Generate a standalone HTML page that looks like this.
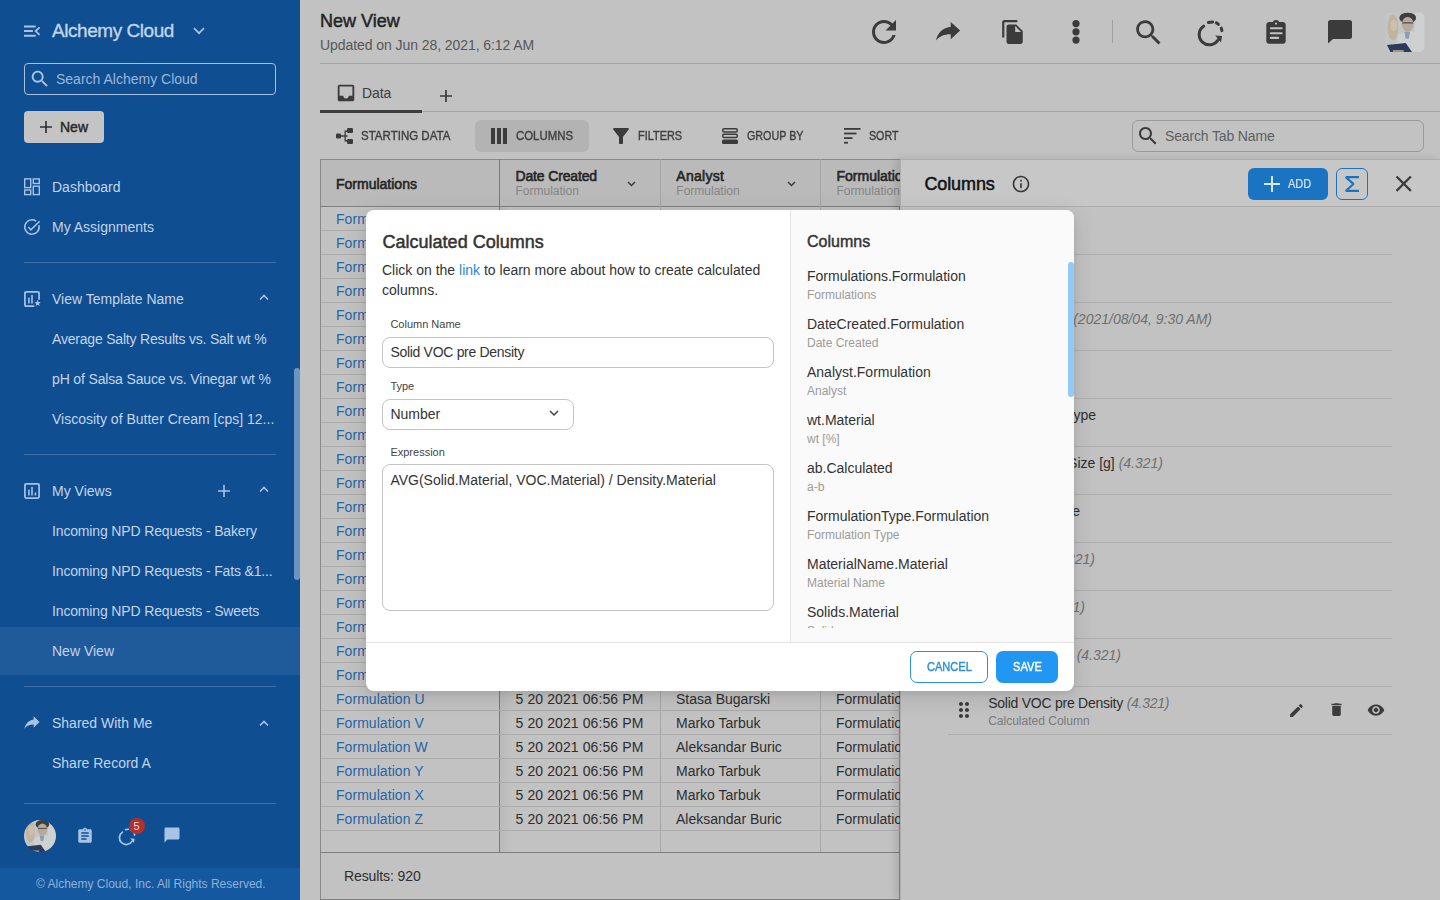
<!DOCTYPE html>
<html><head><meta charset="utf-8">
<style>
*{box-sizing:border-box;margin:0;padding:0}
html,body{width:1440px;height:900px;overflow:hidden;background:#c2c2c2;font-family:"Liberation Sans",sans-serif;color:#333}
.a{position:absolute}
.t{position:absolute;white-space:nowrap;line-height:1}
svg{position:absolute;display:block;overflow:visible}
</style></head><body>

<div class="a" style="left:0px;top:0px;width:300px;height:900px;background:#0f4e91;"></div>
<div class="a" style="left:0px;top:868px;width:300px;height:32px;background:#1459a0;"></div>
<svg style="left:24px;top:24px" width="18" height="14" viewBox="0 0 18 14"><g stroke="#a9c3e4" stroke-width="2" fill="none"><path d="M0 2.5h11.7M0 7.1h8.9M0 11.7h11.7"/><path d="M15.6 3.4L11.6 7.1l4 3.7" stroke-width="1.8"/></g></svg>
<div class="t" style="left:52px;top:21.15px;font-size:19px;color:#c3d4ea;letter-spacing:-0.45px;-webkit-text-stroke:0.35px #c3d4ea;">Alchemy Cloud</div>
<svg style="left:193px;top:27px" width="12" height="8" viewBox="0 0 12 8"><path d="M1 1.2l5 5 5-5" stroke="#a9c3e4" stroke-width="1.7" fill="none"/></svg>
<div class="a" style="left:24px;top:63px;width:252px;height:32px;background:none;border:1px solid #a9c1e0;border-radius:4px"></div>
<svg style="left:29px;top:68px" width="22" height="22" viewBox="0 0 24 24"><path fill="#a9c3e4" d="M15.5 14h-.79l-.28-.27C15.41 12.59 16 11.11 16 9.5 16 5.91 13.09 3 9.5 3S3 5.910 3 9.5 5.91 16 9.5 16c1.61 0 3.09-.59 4.23-1.57l.27.28v.79l5 4.99L20.49 19l-4.99-5zm-6 0C7.01 14 5 11.99 5 9.5S7.01 5 9.5 5 14 7.01 14 9.5 11.99 14 9.5 14z" /></svg>
<div class="t" style="left:56px;top:72.10px;font-size:14px;color:#9db6d8;">Search Alchemy Cloud</div>
<div class="a" style="left:24px;top:111px;width:80px;height:32px;background:#c4c4c4;border-radius:4px"></div>
<svg style="left:40px;top:121px" width="12" height="12" viewBox="0 0 12 12"><path d="M6 0v12M0 6h12" stroke="#2e2e2e" stroke-width="1.6"/></svg>
<div class="t" style="left:60px;top:119.90px;font-size:14px;color:#2a2a2a;-webkit-text-stroke:0.45px #2a2a2a;">New</div>
<svg style="left:24px;top:178px" width="16" height="18" viewBox="0 0 16 18"><g fill="none" stroke="#a9c3e4" stroke-width="1.4"><rect x="0.7" y="0.9" width="6" height="8.7"/><rect x="9.3" y="0.9" width="6" height="4.6"/><rect x="0.7" y="12" width="6" height="4.6"/><rect x="9.3" y="8.2" width="6" height="8.4"/></g></svg>
<div class="t" style="left:52px;top:180.10px;font-size:14px;color:#c3d4ea;">Dashboard</div>
<svg style="left:24px;top:219px" width="16" height="16" viewBox="0 0 16 16"><g fill="none" stroke="#a9c3e4" stroke-width="1.5"><path d="M12.13 2.1A7.2 7.2 0 1 0 14.95 6.14"/><path d="M4.3 7.9L6.9 10.9L15.7 2.2"/></g></svg>
<div class="t" style="left:52px;top:220.10px;font-size:14px;color:#c3d4ea;">My Assignments</div>
<div class="a" style="left:24px;top:262px;width:252px;height:1px;background:#3f72ab;"></div>
<svg style="left:24px;top:291px" width="16" height="16" viewBox="0 0 16 16"><g fill="none" stroke="#a9c3e4" stroke-width="1.7"><path d="M10.3 15.1H2.2Q0.9 15.1 0.9 13.8V2.2Q0.9 0.9 2.2 0.9H13.8Q15.1 0.9 15.1 2.2V8.8"/></g><g fill="#a9c3e4"><rect x="4.1" y="6.4" width="1.6" height="6.3" rx="0.8"/><rect x="7.2" y="3.8" width="1.6" height="8.9" rx="0.8"/><path d="M13.60 8.80 L14.45 11.03 L16.83 11.15 L14.98 12.65 L15.60 14.95 L13.60 13.65 L11.60 14.95 L12.22 12.65 L10.37 11.15 L12.75 11.03z"/></g></svg>
<div class="t" style="left:52px;top:292.10px;font-size:14px;color:#c3d4ea;">View Template Name</div>
<svg style="left:259px;top:294px" width="10" height="6" viewBox="0 0 10 6"><path d="M1 5.5l4-4 4 4" stroke="#a9c3e4" stroke-width="1.6" fill="none"/></svg>
<div class="t" style="left:52px;top:332.10px;font-size:14px;color:#c3d4ea;letter-spacing:-0.2px;">Average Salty Results vs. Salt wt %</div>
<div class="t" style="left:52px;top:372.10px;font-size:14px;color:#c3d4ea;letter-spacing:-0.15px;">pH of Salsa Sauce vs. Vinegar wt %</div>
<div class="t" style="left:52px;top:412.10px;font-size:14px;color:#c3d4ea;">Viscosity of Butter Cream [cps] 12...</div>
<div class="a" style="left:24px;top:454px;width:252px;height:1px;background:#3f72ab;"></div>
<svg style="left:24px;top:483px" width="16" height="16" viewBox="0 0 16 16"><g fill="none" stroke="#a9c3e4" stroke-width="1.7"><rect x="0.9" y="0.9" width="14.2" height="14.2" rx="1.3"/></g><g fill="#a9c3e4"><rect x="4.1" y="6.4" width="1.6" height="6.3" rx="0.8"/><rect x="7.2" y="3.8" width="1.6" height="8.9" rx="0.8"/><rect x="10.6" y="9.2" width="1.6" height="3.5" rx="0.8"/></g></svg>
<div class="t" style="left:52px;top:484.10px;font-size:14px;color:#c3d4ea;">My Views</div>
<svg style="left:218px;top:485px" width="12" height="12" viewBox="0 0 12 12"><path d="M6 0v12M0 6h12" stroke="#a9c3e4" stroke-width="1.6"/></svg>
<svg style="left:259px;top:486px" width="10" height="6" viewBox="0 0 10 6"><path d="M1 5.5l4-4 4 4" stroke="#a9c3e4" stroke-width="1.6" fill="none"/></svg>
<div class="t" style="left:52px;top:524.10px;font-size:14px;color:#c3d4ea;letter-spacing:-0.15px;">Incoming NPD Requests - Bakery</div>
<div class="t" style="left:52px;top:564.10px;font-size:14px;color:#c3d4ea;letter-spacing:-0.15px;">Incoming NPD Requests - Fats &amp;1...</div>
<div class="t" style="left:52px;top:604.10px;font-size:14px;color:#c3d4ea;letter-spacing:-0.15px;">Incoming NPD Requests - Sweets</div>
<div class="a" style="left:0px;top:627px;width:300px;height:48px;background:#1f5a9b;"></div>
<div class="t" style="left:52px;top:644.10px;font-size:14px;color:#c3d4ea;">New View</div>
<div class="a" style="left:24px;top:686px;width:252px;height:1px;background:#3f72ab;"></div>
<svg style="left:22px;top:712px" width="20" height="20" viewBox="0 0 24 24"><path fill="#a9c3e4" d="M14 9V5l7 7-7 7v-4.1c-5 0-8.5 1.6-11 5.1 1-5 4-10 11-11z" /></svg>
<div class="t" style="left:52px;top:716.10px;font-size:14px;color:#c3d4ea;">Shared With Me</div>
<svg style="left:259px;top:720px" width="10" height="6" viewBox="0 0 10 6"><path d="M1 5.5l4-4 4 4" stroke="#a9c3e4" stroke-width="1.6" fill="none"/></svg>
<div class="t" style="left:52px;top:756.10px;font-size:14px;color:#c3d4ea;">Share Record A</div>
<div class="a" style="left:24px;top:803px;width:252px;height:1px;background:#3f72ab;"></div>
<svg style="left:24px;top:820px" width="32" height="32" viewBox="0 0 40 40"><defs><clipPath id="cav"><circle cx="20" cy="20" r="20"/></clipPath><filter id="blr"><feGaussianBlur stdDeviation="0.7"/></filter></defs><g clip-path="url(#cav)" filter="url(#blr)"><rect x="-2" y="-2" width="44" height="44" fill="#c3c6c6"/><rect x="30" y="0" width="12" height="40" fill="#cdd1d1"/><ellipse cx="8" cy="15" rx="5.5" ry="13" fill="#c2b39c"/><ellipse cx="9" cy="13" rx="3.5" ry="6" fill="#cdbfae"/><path d="M12 40L13 23Q21 17 30 20L40 27V40z" fill="#cfd1d1"/><ellipse cx="23" cy="5.5" rx="8.5" ry="5.5" fill="#403c3c"/><ellipse cx="23" cy="12" rx="6" ry="7.5" fill="#b7aa9c"/><path d="M17.5 10.5h11" stroke="#4a4545" stroke-width="1.2"/><path d="M19.5 19.5h6l-1.5 7h-3z" fill="#8e9cb5"/><path d="M2 33L21 31L28 41H6z" fill="#2b3a5c"/><path d="M8 38h11v3H8z" fill="#a49580"/></g></svg>
<svg style="left:76px;top:827px" width="18" height="18" viewBox="0 0 24 24"><path fill="#a9c3e4" d="M19 3h-4.18C14.4 1.84 13.3 1 12 1c-1.3 0-2.4.84-2.82 2H5c-1.1 0-2 .9-2 2v14c0 1.1.9 2 2 2h14c1.1 0 2-.9 2-2V5c0-1.1-.9-2-2-2zm-7 0c.55 0 1 .45 1 1s-.45 1-1 1-1-.45-1-1 .45-1 1-1zm2 14H7v-2h7v2zm3-4H7v-2h10v2zm0-4H7V7h10v2z" /></svg>
<svg style="left:120px;top:828px" width="16" height="16" viewBox="0 0 24 24"><g fill="none" stroke="#a9c3e4" stroke-width="2.6" stroke-linecap="round"><path d="M3.64 6.15A10.2 10.2 0 1 0 18.2 19.7"/><path d="M8.4 2.5L12.6 1.9M16.3 2.8L18.4 4.3M21.3 8.1L21.9 10.6"/></g><path d="M15.2 15.4L22 16L21 22.4z" fill="#a9c3e4"/></svg>
<svg style="left:129px;top:818px" width="16" height="16" viewBox="0 0 16 16"><circle cx="8" cy="8" r="8" fill="#b3302c"/></svg>
<div class="t" style="left:133.5px;top:821.15px;font-size:11px;color:#f0d6d6;">5</div>
<svg style="left:163px;top:826px" width="18" height="18" viewBox="0 0 24 24"><path fill="#a9c3e4" d="M20 2H4c-1.1 0-1.99.9-1.99 2L2 22l4-4h14c1.1 0 2-.9 2-2V4c0-1.1-.9-2-2-2z" /></svg>
<div class="t" style="left:36px;top:877.80px;font-size:12px;color:#93afd5;">© Alchemy Cloud, Inc. All Rights Reserved.</div>
<div class="a" style="left:294px;top:368px;width:6px;height:212px;background:#6a94c4;border-radius:3px"></div>
<div class="t" style="left:320px;top:11.50px;font-size:18px;color:#262626;-webkit-text-stroke:0.5px #262626;">New View</div>
<div class="t" style="left:320px;top:38.10px;font-size:14px;color:#575757;letter-spacing:-0.07px;">Updated on Jun 28, 2021, 6:12 AM</div>
<div class="a" style="left:320px;top:63px;width:1120px;height:1px;background:#a6a6a6;"></div>
<svg style="left:866px;top:14px" width="36" height="36" viewBox="0 0 24 24"><path fill="#3b3b3b" d="M17.65 6.35C16.2 4.9 14.21 4 12 4c-4.42 0-7.99 3.58-7.99 8s3.57 8 7.99 8c3.73 0 6.84-2.55 7.73-6h-2.08c-.82 2.33-3.04 4-5.65 4-3.31 0-6-2.69-6-6s2.69-6 6-6c1.66 0 3.140.69 4.22 1.78L13 11h7V4l-2.35 2.35z" /></svg>
<svg style="left:934px;top:18px" width="28" height="28" viewBox="0 0 28 28"><path fill="#3b3b3b" d="M14 9V5l7 7-7 7v-4.1c-5 0-8.5 1.6-11 5.1 1-5 4-10 11-11z" transform="translate(-2 -2.3) scale(1.34 1.24)"/></svg>
<svg style="left:999.5px;top:18.9px" width="26" height="26" viewBox="0 0 24 24"><path fill="#3b3b3b" d="M16 1H4c-1.1 0-2 .9-2 2v14h2V3h12V1zm-1 4l6 6v10c0 1.1-.9 2-2 2H7.99C6.89 23 6 22.1 6 21l.01-14c0-1.1.89-2 1.99-2h7zm-1 7h5.5L14 6.5V12z" /></svg>
<svg style="left:1072px;top:20px" width="8" height="24" viewBox="0 0 8 24"><g fill="#3b3b3b"><circle cx="4" cy="3.6" r="3.6"/><circle cx="4" cy="11.85" r="3.6"/><circle cx="4" cy="20.1" r="3.6"/></g></svg>
<div class="a" style="left:1112px;top:20px;width:1px;height:23px;background:#a0a0a0;"></div>
<svg style="left:1131.7px;top:16.1px" width="33.4" height="33.4" viewBox="0 0 24 24"><path fill="#3b3b3b" d="M15.5 14h-.79l-.28-.27C15.41 12.59 16 11.11 16 9.5 16 5.91 13.09 3 9.5 3S3 5.910 3 9.5 5.91 16 9.5 16c1.61 0 3.09-.59 4.23-1.57l.27.28v.79l5 4.99L20.49 19l-4.99-5zm-6 0C7.01 14 5 11.99 5 9.5S7.01 5 9.5 5 14 7.01 14 9.5 11.99 14 9.5 14z" /></svg>
<svg style="left:1200px;top:20px" width="24" height="24" viewBox="0 0 24 24"><g fill="none" stroke="#3b3b3b" stroke-width="3" stroke-linecap="round"><path d="M3.64 6.15A10.2 10.2 0 1 0 18.2 19.7"/><path d="M8.4 2.5L12.6 1.9M16.3 2.8L18.4 4.3M21.3 8.1L21.9 10.6"/></g><path d="M15.2 15.4L22 16L21 22.4z" fill="#3b3b3b"/></svg>
<svg style="left:1266px;top:20px" width="20" height="24" viewBox="0 0 20 24"><g fill="#3b3b3b"><rect x="0.3" y="2" width="19.4" height="21.8" rx="3"/><circle cx="10" cy="3.3" r="3.2"/></g><circle cx="10" cy="3.6" r="1.1" fill="#c2c2c2"/><g stroke="#c2c2c2" stroke-width="2.1" stroke-linecap="round"><path d="M4.8 8.2h10.8M4.8 13.2h10.8M4.8 17.9h7.4"/></g></svg>
<svg style="left:1328px;top:20px" width="24" height="24" viewBox="0 0 24 24"><path fill="#3b3b3b" d="M2.5 0h19A2.5 2.5 0 0 1 24 2.5v14a2.5 2.5 0 0 1-2.5 2.5H5L0 23.5V2.5A2.5 2.5 0 0 1 2.5 0z"/></svg>
<svg style="left:1384.5px;top:11.7px" width="39.5" height="40.5" viewBox="0 0 40 40"><defs><clipPath id="cav2"><rect width="40" height="40" rx="5"/></clipPath></defs><g clip-path="url(#cav2)" filter="url(#blr)"><rect x="-2" y="-2" width="44" height="44" fill="#c3c6c6"/><rect x="30" y="0" width="12" height="40" fill="#cdd1d1"/><ellipse cx="8" cy="15" rx="5.5" ry="13" fill="#c2b39c"/><ellipse cx="9" cy="13" rx="3.5" ry="6" fill="#cdbfae"/><path d="M12 40L13 23Q21 17 30 20L40 27V40z" fill="#cfd1d1"/><ellipse cx="23" cy="5.5" rx="8.5" ry="5.5" fill="#403c3c"/><ellipse cx="23" cy="12" rx="6" ry="7.5" fill="#b7aa9c"/><path d="M17.5 10.5h11" stroke="#4a4545" stroke-width="1.2"/><path d="M19.5 19.5h6l-1.5 7h-3z" fill="#8e9cb5"/><path d="M2 33L21 31L28 41H6z" fill="#2b3a5c"/><path d="M8 38h11v3H8z" fill="#a49580"/></g></svg>
<svg style="left:335px;top:82px" width="22" height="22" viewBox="0 0 24 24"><path fill="#3b3b3b" d="M19 3H4.99c-1.11 0-1.98.89-1.98 2L3 19c0 1.1.88 2 1.99 2H19c1.1 0 2-.9 2-2V5c0-1.11-.9-2-2-2zm0 12h-4c0 1.66-1.35 3-3 3s-3-1.34-3-3H4.99V5H19v10z" /></svg>
<div class="t" style="left:362px;top:86.10px;font-size:14px;color:#3d3d3d;letter-spacing:-0.1px;">Data</div>
<svg style="left:440px;top:90px" width="12" height="12" viewBox="0 0 12 12"><path d="M6 0v12M0 6h12" stroke="#3b3b3b" stroke-width="1.7"/></svg>
<div class="a" style="left:320px;top:111px;width:1120px;height:1px;background:#a6a6a6;"></div>
<div class="a" style="left:320px;top:110px;width:102px;height:2.5px;background:#3e3e3e;"></div>
<div class="a" style="left:475px;top:120px;width:114px;height:32px;background:#b3b3b3;border-radius:6px"></div>
<svg style="left:336px;top:128px" width="17" height="16" viewBox="0 0 17 16"><g fill="#3b3b3b"><rect x="0" y="5.5" width="5" height="5" rx="1.2"/><rect x="11" y="0" width="6" height="5" rx="1.2"/><rect x="11" y="11" width="6" height="5" rx="1.2"/><path d="M4 7.2h4.5V2.5h3v1.4h-1.7v3.3h1.7v1.6h-1.7v3.3h1.7v1.4h-3V8.8H4z"/></g></svg>
<div class="t" style="left:360.5px;top:128.65px;font-size:13px;color:#404040;transform:scaleX(0.886);transform-origin:0 0;-webkit-text-stroke:0.4px #404040;">STARTING DATA</div>
<svg style="left:491px;top:128px" width="16" height="16" viewBox="0 0 16 16"><g fill="#3b3b3b"><rect x="0" y="0" width="4" height="16"/><rect x="6" y="0" width="4" height="16"/><rect x="12" y="0" width="4" height="16"/></g></svg>
<div class="t" style="left:515.5px;top:128.65px;font-size:13px;color:#404040;transform:scaleX(0.877);transform-origin:0 0;-webkit-text-stroke:0.4px #404040;">COLUMNS</div>
<svg style="left:609px;top:124px" width="24" height="24" viewBox="0 0 24 24"><path fill="#3b3b3b" d="M4.25 5.61C6.27 8.2 10 13 10 13v6c0 .55.45 1 1 1h2c.55 0 1-.45 1-1v-6s3.72-4.8 5.74-7.39c.51-.66.04-1.61-.79-1.61H5.04c-.83 0-1.3.95-.79 1.61z" /></svg>
<div class="t" style="left:637.5px;top:128.65px;font-size:13px;color:#404040;transform:scaleX(0.84);transform-origin:0 0;-webkit-text-stroke:0.4px #404040;">FILTERS</div>
<svg style="left:722px;top:128px" width="16" height="16" viewBox="0 0 16 16"><g fill="none" stroke="#3b3b3b" stroke-width="1.5"><rect x="0.75" y="0.75" width="14.5" height="3.3" rx="1.3"/><rect x="0.75" y="6.3" width="14.5" height="3.3" rx="1.3"/></g><rect x="0" y="11.4" width="16" height="4.6" rx="1.5" fill="#3b3b3b"/></svg>
<div class="t" style="left:746.5px;top:128.65px;font-size:13px;color:#404040;transform:scaleX(0.826);transform-origin:0 0;-webkit-text-stroke:0.4px #404040;">GROUP BY</div>
<svg style="left:844px;top:128px" width="17" height="16" viewBox="0 0 17 16"><g fill="#3b3b3b"><rect x="0" y="0" width="16.5" height="1.8"/><rect x="0" y="4.6" width="12.5" height="1.8"/><rect x="0" y="9.2" width="8.5" height="1.8"/><rect x="0" y="13.8" width="4" height="1.8"/></g></svg>
<div class="t" style="left:868.5px;top:128.65px;font-size:13px;color:#404040;transform:scaleX(0.82);transform-origin:0 0;-webkit-text-stroke:0.4px #404040;">SORT</div>
<div class="a" style="left:1132px;top:120px;width:292px;height:32px;background:none;border:1px solid #9a9a9a;border-radius:6px"></div>
<svg style="left:1136px;top:124px" width="24" height="24" viewBox="0 0 24 24"><path fill="#3b3b3b" d="M15.5 14h-.79l-.28-.27C15.41 12.59 16 11.11 16 9.5 16 5.91 13.09 3 9.5 3S3 5.910 3 9.5 5.91 16 9.5 16c1.61 0 3.09-.59 4.23-1.57l.27.28v.79l5 4.99L20.49 19l-4.99-5zm-6 0C7.01 14 5 11.99 5 9.5S7.01 5 9.5 5 14 7.01 14 9.5 11.99 14 9.5 14z" /></svg>
<div class="t" style="left:1165px;top:128.80px;font-size:14px;color:#5f5f5f;letter-spacing:-0.15px;">Search Tab Name</div>
<div class="a" style="left:320px;top:159px;width:580px;height:741px;background:#c2c2c2;border:1px solid #8a8a8a;border-bottom:none"></div>
<div class="a" style="left:321px;top:160px;width:579px;height:47px;background:#bababa;"></div>
<div class="a" style="left:320px;top:206px;width:580px;height:1px;background:#808080;"></div>
<div class="a" style="left:500px;top:207px;width:12px;height:646px;background:linear-gradient(to right, rgba(0,0,0,0.045), rgba(0,0,0,0));"></div>
<div class="a" style="left:499px;top:159px;width:1.2px;height:694px;background:#7a7a7a;"></div>
<div class="a" style="left:660px;top:159px;width:1px;height:694px;background:#a6a6a6;"></div>
<div class="a" style="left:820px;top:159px;width:1px;height:694px;background:#a6a6a6;"></div>
<div class="t" style="left:336px;top:177.10px;font-size:14px;color:#262626;-webkit-text-stroke:0.6px #262626;">Formulations</div>
<div class="t" style="left:515.5px;top:168.60px;font-size:14px;color:#262626;letter-spacing:-0.15px;-webkit-text-stroke:0.6px #262626;">Date Created</div>
<div class="t" style="left:515.5px;top:184.80px;font-size:12px;color:#858585;">Formulation</div>
<svg style="left:627px;top:181px" width="9" height="6" viewBox="0 0 9 6"><path d="M1 1l3.5 3.5L8 1" stroke="#3b3b3b" stroke-width="1.5" fill="none"/></svg>
<div class="t" style="left:676.3px;top:168.90px;font-size:14px;color:#262626;letter-spacing:0.3px;-webkit-text-stroke:0.6px #262626;">Analyst</div>
<div class="t" style="left:676.3px;top:185.00px;font-size:12px;color:#858585;">Formulation</div>
<svg style="left:787px;top:181px" width="9" height="6" viewBox="0 0 9 6"><path d="M1 1l3.5 3.5L8 1" stroke="#3b3b3b" stroke-width="1.5" fill="none"/></svg>
<div class="t" style="left:836.5px;top:168.90px;font-size:14px;color:#262626;-webkit-text-stroke:0.6px #262626;">Formulation</div>
<div class="t" style="left:836.5px;top:185.00px;font-size:12px;color:#858585;">Formulation</div>
<div class="a" style="left:321px;top:230px;width:579px;height:1px;background:#acacac;"></div>
<div class="t" style="left:336px;top:211.60px;font-size:14px;color:#2466a6;letter-spacing:0.05px;">Formulation A</div>
<div class="t" style="left:515.5px;top:211.60px;font-size:14px;color:#2e2e2e;letter-spacing:0.1px;">5 20 2021 06:56 PM</div>
<div class="t" style="left:676px;top:211.60px;font-size:14px;color:#2e2e2e;">Marko Tarbuk</div>
<div class="a" style="left:821px;top:209.5px;width:79px;height:18px;overflow:hidden"><div class="t" style="left:15px;top:2.1px;font-size:14px;color:#2e2e2e">Formulation</div></div>
<div class="a" style="left:321px;top:254px;width:579px;height:1px;background:#acacac;"></div>
<div class="t" style="left:336px;top:235.60px;font-size:14px;color:#2466a6;letter-spacing:0.05px;">Formulation B</div>
<div class="t" style="left:515.5px;top:235.60px;font-size:14px;color:#2e2e2e;letter-spacing:0.1px;">5 20 2021 06:56 PM</div>
<div class="t" style="left:676px;top:235.60px;font-size:14px;color:#2e2e2e;">Aleksandar Buric</div>
<div class="a" style="left:821px;top:233.5px;width:79px;height:18px;overflow:hidden"><div class="t" style="left:15px;top:2.1px;font-size:14px;color:#2e2e2e">Formulation</div></div>
<div class="a" style="left:321px;top:278px;width:579px;height:1px;background:#acacac;"></div>
<div class="t" style="left:336px;top:259.60px;font-size:14px;color:#2466a6;letter-spacing:0.05px;">Formulation C</div>
<div class="t" style="left:515.5px;top:259.60px;font-size:14px;color:#2e2e2e;letter-spacing:0.1px;">5 20 2021 06:56 PM</div>
<div class="t" style="left:676px;top:259.60px;font-size:14px;color:#2e2e2e;">Stasa Bugarski</div>
<div class="a" style="left:821px;top:257.5px;width:79px;height:18px;overflow:hidden"><div class="t" style="left:15px;top:2.1px;font-size:14px;color:#2e2e2e">Formulation</div></div>
<div class="a" style="left:321px;top:302px;width:579px;height:1px;background:#acacac;"></div>
<div class="t" style="left:336px;top:283.60px;font-size:14px;color:#2466a6;letter-spacing:0.05px;">Formulation D</div>
<div class="t" style="left:515.5px;top:283.60px;font-size:14px;color:#2e2e2e;letter-spacing:0.1px;">5 20 2021 06:56 PM</div>
<div class="t" style="left:676px;top:283.60px;font-size:14px;color:#2e2e2e;">Marko Tarbuk</div>
<div class="a" style="left:821px;top:281.5px;width:79px;height:18px;overflow:hidden"><div class="t" style="left:15px;top:2.1px;font-size:14px;color:#2e2e2e">Formulation</div></div>
<div class="a" style="left:321px;top:326px;width:579px;height:1px;background:#acacac;"></div>
<div class="t" style="left:336px;top:307.60px;font-size:14px;color:#2466a6;letter-spacing:0.05px;">Formulation E</div>
<div class="t" style="left:515.5px;top:307.60px;font-size:14px;color:#2e2e2e;letter-spacing:0.1px;">5 20 2021 06:56 PM</div>
<div class="t" style="left:676px;top:307.60px;font-size:14px;color:#2e2e2e;">Aleksandar Buric</div>
<div class="a" style="left:821px;top:305.5px;width:79px;height:18px;overflow:hidden"><div class="t" style="left:15px;top:2.1px;font-size:14px;color:#2e2e2e">Formulation</div></div>
<div class="a" style="left:321px;top:350px;width:579px;height:1px;background:#acacac;"></div>
<div class="t" style="left:336px;top:331.60px;font-size:14px;color:#2466a6;letter-spacing:0.05px;">Formulation F</div>
<div class="t" style="left:515.5px;top:331.60px;font-size:14px;color:#2e2e2e;letter-spacing:0.1px;">5 20 2021 06:56 PM</div>
<div class="t" style="left:676px;top:331.60px;font-size:14px;color:#2e2e2e;">Stasa Bugarski</div>
<div class="a" style="left:821px;top:329.5px;width:79px;height:18px;overflow:hidden"><div class="t" style="left:15px;top:2.1px;font-size:14px;color:#2e2e2e">Formulation</div></div>
<div class="a" style="left:321px;top:374px;width:579px;height:1px;background:#acacac;"></div>
<div class="t" style="left:336px;top:355.60px;font-size:14px;color:#2466a6;letter-spacing:0.05px;">Formulation G</div>
<div class="t" style="left:515.5px;top:355.60px;font-size:14px;color:#2e2e2e;letter-spacing:0.1px;">5 20 2021 06:56 PM</div>
<div class="t" style="left:676px;top:355.60px;font-size:14px;color:#2e2e2e;">Marko Tarbuk</div>
<div class="a" style="left:821px;top:353.5px;width:79px;height:18px;overflow:hidden"><div class="t" style="left:15px;top:2.1px;font-size:14px;color:#2e2e2e">Formulation</div></div>
<div class="a" style="left:321px;top:398px;width:579px;height:1px;background:#acacac;"></div>
<div class="t" style="left:336px;top:379.60px;font-size:14px;color:#2466a6;letter-spacing:0.05px;">Formulation H</div>
<div class="t" style="left:515.5px;top:379.60px;font-size:14px;color:#2e2e2e;letter-spacing:0.1px;">5 20 2021 06:56 PM</div>
<div class="t" style="left:676px;top:379.60px;font-size:14px;color:#2e2e2e;">Aleksandar Buric</div>
<div class="a" style="left:821px;top:377.5px;width:79px;height:18px;overflow:hidden"><div class="t" style="left:15px;top:2.1px;font-size:14px;color:#2e2e2e">Formulation</div></div>
<div class="a" style="left:321px;top:422px;width:579px;height:1px;background:#acacac;"></div>
<div class="t" style="left:336px;top:403.60px;font-size:14px;color:#2466a6;letter-spacing:0.05px;">Formulation I</div>
<div class="t" style="left:515.5px;top:403.60px;font-size:14px;color:#2e2e2e;letter-spacing:0.1px;">5 20 2021 06:56 PM</div>
<div class="t" style="left:676px;top:403.60px;font-size:14px;color:#2e2e2e;">Stasa Bugarski</div>
<div class="a" style="left:821px;top:401.5px;width:79px;height:18px;overflow:hidden"><div class="t" style="left:15px;top:2.1px;font-size:14px;color:#2e2e2e">Formulation</div></div>
<div class="a" style="left:321px;top:446px;width:579px;height:1px;background:#acacac;"></div>
<div class="t" style="left:336px;top:427.60px;font-size:14px;color:#2466a6;letter-spacing:0.05px;">Formulation J</div>
<div class="t" style="left:515.5px;top:427.60px;font-size:14px;color:#2e2e2e;letter-spacing:0.1px;">5 20 2021 06:56 PM</div>
<div class="t" style="left:676px;top:427.60px;font-size:14px;color:#2e2e2e;">Marko Tarbuk</div>
<div class="a" style="left:821px;top:425.5px;width:79px;height:18px;overflow:hidden"><div class="t" style="left:15px;top:2.1px;font-size:14px;color:#2e2e2e">Formulation</div></div>
<div class="a" style="left:321px;top:470px;width:579px;height:1px;background:#acacac;"></div>
<div class="t" style="left:336px;top:451.60px;font-size:14px;color:#2466a6;letter-spacing:0.05px;">Formulation K</div>
<div class="t" style="left:515.5px;top:451.60px;font-size:14px;color:#2e2e2e;letter-spacing:0.1px;">5 20 2021 06:56 PM</div>
<div class="t" style="left:676px;top:451.60px;font-size:14px;color:#2e2e2e;">Aleksandar Buric</div>
<div class="a" style="left:821px;top:449.5px;width:79px;height:18px;overflow:hidden"><div class="t" style="left:15px;top:2.1px;font-size:14px;color:#2e2e2e">Formulation</div></div>
<div class="a" style="left:321px;top:494px;width:579px;height:1px;background:#acacac;"></div>
<div class="t" style="left:336px;top:475.60px;font-size:14px;color:#2466a6;letter-spacing:0.05px;">Formulation L</div>
<div class="t" style="left:515.5px;top:475.60px;font-size:14px;color:#2e2e2e;letter-spacing:0.1px;">5 20 2021 06:56 PM</div>
<div class="t" style="left:676px;top:475.60px;font-size:14px;color:#2e2e2e;">Stasa Bugarski</div>
<div class="a" style="left:821px;top:473.5px;width:79px;height:18px;overflow:hidden"><div class="t" style="left:15px;top:2.1px;font-size:14px;color:#2e2e2e">Formulation</div></div>
<div class="a" style="left:321px;top:518px;width:579px;height:1px;background:#acacac;"></div>
<div class="t" style="left:336px;top:499.60px;font-size:14px;color:#2466a6;letter-spacing:0.05px;">Formulation M</div>
<div class="t" style="left:515.5px;top:499.60px;font-size:14px;color:#2e2e2e;letter-spacing:0.1px;">5 20 2021 06:56 PM</div>
<div class="t" style="left:676px;top:499.60px;font-size:14px;color:#2e2e2e;">Marko Tarbuk</div>
<div class="a" style="left:821px;top:497.5px;width:79px;height:18px;overflow:hidden"><div class="t" style="left:15px;top:2.1px;font-size:14px;color:#2e2e2e">Formulation</div></div>
<div class="a" style="left:321px;top:542px;width:579px;height:1px;background:#acacac;"></div>
<div class="t" style="left:336px;top:523.60px;font-size:14px;color:#2466a6;letter-spacing:0.05px;">Formulation N</div>
<div class="t" style="left:515.5px;top:523.60px;font-size:14px;color:#2e2e2e;letter-spacing:0.1px;">5 20 2021 06:56 PM</div>
<div class="t" style="left:676px;top:523.60px;font-size:14px;color:#2e2e2e;">Aleksandar Buric</div>
<div class="a" style="left:821px;top:521.5px;width:79px;height:18px;overflow:hidden"><div class="t" style="left:15px;top:2.1px;font-size:14px;color:#2e2e2e">Formulation</div></div>
<div class="a" style="left:321px;top:566px;width:579px;height:1px;background:#acacac;"></div>
<div class="t" style="left:336px;top:547.60px;font-size:14px;color:#2466a6;letter-spacing:0.05px;">Formulation O</div>
<div class="t" style="left:515.5px;top:547.60px;font-size:14px;color:#2e2e2e;letter-spacing:0.1px;">5 20 2021 06:56 PM</div>
<div class="t" style="left:676px;top:547.60px;font-size:14px;color:#2e2e2e;">Stasa Bugarski</div>
<div class="a" style="left:821px;top:545.5px;width:79px;height:18px;overflow:hidden"><div class="t" style="left:15px;top:2.1px;font-size:14px;color:#2e2e2e">Formulation</div></div>
<div class="a" style="left:321px;top:590px;width:579px;height:1px;background:#acacac;"></div>
<div class="t" style="left:336px;top:571.60px;font-size:14px;color:#2466a6;letter-spacing:0.05px;">Formulation P</div>
<div class="t" style="left:515.5px;top:571.60px;font-size:14px;color:#2e2e2e;letter-spacing:0.1px;">5 20 2021 06:56 PM</div>
<div class="t" style="left:676px;top:571.60px;font-size:14px;color:#2e2e2e;">Marko Tarbuk</div>
<div class="a" style="left:821px;top:569.5px;width:79px;height:18px;overflow:hidden"><div class="t" style="left:15px;top:2.1px;font-size:14px;color:#2e2e2e">Formulation</div></div>
<div class="a" style="left:321px;top:614px;width:579px;height:1px;background:#acacac;"></div>
<div class="t" style="left:336px;top:595.60px;font-size:14px;color:#2466a6;letter-spacing:0.05px;">Formulation Q</div>
<div class="t" style="left:515.5px;top:595.60px;font-size:14px;color:#2e2e2e;letter-spacing:0.1px;">5 20 2021 06:56 PM</div>
<div class="t" style="left:676px;top:595.60px;font-size:14px;color:#2e2e2e;">Aleksandar Buric</div>
<div class="a" style="left:821px;top:593.5px;width:79px;height:18px;overflow:hidden"><div class="t" style="left:15px;top:2.1px;font-size:14px;color:#2e2e2e">Formulation</div></div>
<div class="a" style="left:321px;top:638px;width:579px;height:1px;background:#acacac;"></div>
<div class="t" style="left:336px;top:619.60px;font-size:14px;color:#2466a6;letter-spacing:0.05px;">Formulation R</div>
<div class="t" style="left:515.5px;top:619.60px;font-size:14px;color:#2e2e2e;letter-spacing:0.1px;">5 20 2021 06:56 PM</div>
<div class="t" style="left:676px;top:619.60px;font-size:14px;color:#2e2e2e;">Stasa Bugarski</div>
<div class="a" style="left:821px;top:617.5px;width:79px;height:18px;overflow:hidden"><div class="t" style="left:15px;top:2.1px;font-size:14px;color:#2e2e2e">Formulation</div></div>
<div class="a" style="left:321px;top:662px;width:579px;height:1px;background:#acacac;"></div>
<div class="t" style="left:336px;top:643.60px;font-size:14px;color:#2466a6;letter-spacing:0.05px;">Formulation S</div>
<div class="t" style="left:515.5px;top:643.60px;font-size:14px;color:#2e2e2e;letter-spacing:0.1px;">5 20 2021 06:56 PM</div>
<div class="t" style="left:676px;top:643.60px;font-size:14px;color:#2e2e2e;">Marko Tarbuk</div>
<div class="a" style="left:821px;top:641.5px;width:79px;height:18px;overflow:hidden"><div class="t" style="left:15px;top:2.1px;font-size:14px;color:#2e2e2e">Formulation</div></div>
<div class="a" style="left:321px;top:686px;width:579px;height:1px;background:#acacac;"></div>
<div class="t" style="left:336px;top:667.60px;font-size:14px;color:#2466a6;letter-spacing:0.05px;">Formulation T</div>
<div class="t" style="left:515.5px;top:667.60px;font-size:14px;color:#2e2e2e;letter-spacing:0.1px;">5 20 2021 06:56 PM</div>
<div class="t" style="left:676px;top:667.60px;font-size:14px;color:#2e2e2e;">Aleksandar Buric</div>
<div class="a" style="left:821px;top:665.5px;width:79px;height:18px;overflow:hidden"><div class="t" style="left:15px;top:2.1px;font-size:14px;color:#2e2e2e">Formulation</div></div>
<div class="a" style="left:321px;top:710px;width:579px;height:1px;background:#acacac;"></div>
<div class="t" style="left:336px;top:691.60px;font-size:14px;color:#2466a6;letter-spacing:0.05px;">Formulation U</div>
<div class="t" style="left:515.5px;top:691.60px;font-size:14px;color:#2e2e2e;letter-spacing:0.1px;">5 20 2021 06:56 PM</div>
<div class="t" style="left:676px;top:691.60px;font-size:14px;color:#2e2e2e;">Stasa Bugarski</div>
<div class="a" style="left:821px;top:689.5px;width:79px;height:18px;overflow:hidden"><div class="t" style="left:15px;top:2.1px;font-size:14px;color:#2e2e2e">Formulation</div></div>
<div class="a" style="left:321px;top:734px;width:579px;height:1px;background:#acacac;"></div>
<div class="t" style="left:336px;top:715.60px;font-size:14px;color:#2466a6;letter-spacing:0.05px;">Formulation V</div>
<div class="t" style="left:515.5px;top:715.60px;font-size:14px;color:#2e2e2e;letter-spacing:0.1px;">5 20 2021 06:56 PM</div>
<div class="t" style="left:676px;top:715.60px;font-size:14px;color:#2e2e2e;">Marko Tarbuk</div>
<div class="a" style="left:821px;top:713.5px;width:79px;height:18px;overflow:hidden"><div class="t" style="left:15px;top:2.1px;font-size:14px;color:#2e2e2e">Formulation</div></div>
<div class="a" style="left:321px;top:758px;width:579px;height:1px;background:#acacac;"></div>
<div class="t" style="left:336px;top:739.60px;font-size:14px;color:#2466a6;letter-spacing:0.05px;">Formulation W</div>
<div class="t" style="left:515.5px;top:739.60px;font-size:14px;color:#2e2e2e;letter-spacing:0.1px;">5 20 2021 06:56 PM</div>
<div class="t" style="left:676px;top:739.60px;font-size:14px;color:#2e2e2e;">Aleksandar Buric</div>
<div class="a" style="left:821px;top:737.5px;width:79px;height:18px;overflow:hidden"><div class="t" style="left:15px;top:2.1px;font-size:14px;color:#2e2e2e">Formulation</div></div>
<div class="a" style="left:321px;top:782px;width:579px;height:1px;background:#acacac;"></div>
<div class="t" style="left:336px;top:763.60px;font-size:14px;color:#2466a6;letter-spacing:0.05px;">Formulation Y</div>
<div class="t" style="left:515.5px;top:763.60px;font-size:14px;color:#2e2e2e;letter-spacing:0.1px;">5 20 2021 06:56 PM</div>
<div class="t" style="left:676px;top:763.60px;font-size:14px;color:#2e2e2e;">Marko Tarbuk</div>
<div class="a" style="left:821px;top:761.5px;width:79px;height:18px;overflow:hidden"><div class="t" style="left:15px;top:2.1px;font-size:14px;color:#2e2e2e">Formulation</div></div>
<div class="a" style="left:321px;top:806px;width:579px;height:1px;background:#acacac;"></div>
<div class="t" style="left:336px;top:787.60px;font-size:14px;color:#2466a6;letter-spacing:0.05px;">Formulation X</div>
<div class="t" style="left:515.5px;top:787.60px;font-size:14px;color:#2e2e2e;letter-spacing:0.1px;">5 20 2021 06:56 PM</div>
<div class="t" style="left:676px;top:787.60px;font-size:14px;color:#2e2e2e;">Marko Tarbuk</div>
<div class="a" style="left:821px;top:785.5px;width:79px;height:18px;overflow:hidden"><div class="t" style="left:15px;top:2.1px;font-size:14px;color:#2e2e2e">Formulation</div></div>
<div class="a" style="left:321px;top:830px;width:579px;height:1px;background:#acacac;"></div>
<div class="t" style="left:336px;top:811.60px;font-size:14px;color:#2466a6;letter-spacing:0.05px;">Formulation Z</div>
<div class="t" style="left:515.5px;top:811.60px;font-size:14px;color:#2e2e2e;letter-spacing:0.1px;">5 20 2021 06:56 PM</div>
<div class="t" style="left:676px;top:811.60px;font-size:14px;color:#2e2e2e;">Aleksandar Buric</div>
<div class="a" style="left:821px;top:809.5px;width:79px;height:18px;overflow:hidden"><div class="t" style="left:15px;top:2.1px;font-size:14px;color:#2e2e2e">Formulation</div></div>
<div class="a" style="left:320px;top:852px;width:580px;height:1px;background:#7e7e7e;"></div>
<div class="a" style="left:320px;top:899px;width:580px;height:1px;background:#7e7e7e;"></div>
<div class="t" style="left:344px;top:869.10px;font-size:14px;color:#2e2e2e;letter-spacing:-0.1px;">Results: 920</div>
<div class="a" style="left:900px;top:159px;width:540px;height:741px;background:#c2c2c2;box-shadow:-4px 0 8px rgba(0,0,0,0.12)"></div>
<div class="a" style="left:900px;top:159px;width:1px;height:741px;background:#adadad;"></div>
<div class="a" style="left:900px;top:159px;width:540px;height:1px;background:#adadad;"></div>
<div class="a" style="left:901px;top:160px;width:539px;height:46px;background:#c7c7c7;"></div>
<div class="a" style="left:900px;top:206px;width:540px;height:1px;background:#adadad;"></div>
<div class="t" style="left:924.4px;top:174.70px;font-size:18px;color:#111;letter-spacing:-0.1px;-webkit-text-stroke:0.5px #111;">Columns</div>
<svg style="left:1011px;top:173.6px" width="20" height="20" viewBox="0 0 24 24"><path fill="#3b3b3b" d="M11 7h2v2h-2zm0 4h2v6h-2zm1-9C6.48 2 2 6.48 2 12s4.48 10 10 10 10-4.48 10-10S17.52 2 12 2zm0 18c-4.41 0-8-3.59-8-8s3.59-8 8-8 8 3.59 8 8-3.59 8-8 8z" /></svg>
<div class="a" style="left:1248px;top:168px;width:80px;height:32px;background:#1a74c2;border-radius:6px"></div>
<svg style="left:1264px;top:176px" width="16" height="16" viewBox="0 0 16 16"><path d="M8 0v16M0 8h16" stroke="#d6e6f4" stroke-width="2"/></svg>
<div class="t" style="left:1288px;top:177.80px;font-size:12px;color:#d3e3f2;transform:scaleX(0.92);transform-origin:0 0;-webkit-text-stroke:0.2px #d3e3f2;">ADD</div>
<div class="a" style="left:1336px;top:168px;width:32px;height:32px;background:none;border:1px solid #1a74c2;border-radius:6px"></div>
<svg style="left:1344px;top:176px" width="16" height="16" viewBox="0 0 16 16"><path d="M15 1.1H1.8L9.4 7.9L1.8 14.9H15" stroke="#1a72c0" stroke-width="2.1" fill="none" stroke-linejoin="bevel"/></svg>
<svg style="left:1390.3px;top:170.3px" width="27.4" height="27.4" viewBox="0 0 24 24"><path fill="#3b3b3b" d="M19 6.41L17.59 5 12 10.59 6.41 5 5 6.41 10.59 12 5 17.59 6.41 19 12 13.41 17.59 19 19 17.59 13.41 12z" /></svg>
<div class="a" style="left:948px;top:254px;width:444px;height:1.3px;background:#afafaf;"></div>
<div class="a" style="left:948px;top:302px;width:444px;height:1.3px;background:#afafaf;"></div>
<div class="a" style="left:948px;top:350px;width:444px;height:1.3px;background:#afafaf;"></div>
<div class="a" style="left:948px;top:398px;width:444px;height:1.3px;background:#afafaf;"></div>
<div class="a" style="left:948px;top:446px;width:444px;height:1.3px;background:#afafaf;"></div>
<div class="a" style="left:948px;top:494px;width:444px;height:1.3px;background:#afafaf;"></div>
<div class="a" style="left:948px;top:542px;width:444px;height:1.3px;background:#afafaf;"></div>
<div class="a" style="left:948px;top:590px;width:444px;height:1.3px;background:#afafaf;"></div>
<div class="a" style="left:948px;top:638px;width:444px;height:1.3px;background:#afafaf;"></div>
<div class="a" style="left:948px;top:686px;width:444px;height:1.3px;background:#afafaf;"></div>
<div class="a" style="left:948px;top:734px;width:444px;height:1.3px;background:#afafaf;"></div>
<div class="t" style="right:228px;top:312.10px;font-size:14px;color:#2e2e2e;">Date Created <i style="color:#6f6f6f">(2021/08/04, 9:30 AM)</i></div>
<div class="t" style="right:344px;top:408.10px;font-size:14px;color:#2e2e2e;">Formulation Type</div>
<div class="t" style="right:277px;top:456.10px;font-size:14px;color:#2e2e2e;">Batch Size [g] <i style="color:#6f6f6f">(4.321)</i></div>
<div class="t" style="right:360px;top:504.10px;font-size:14px;color:#2e2e2e;">Formulation Name</div>
<div class="t" style="right:345px;top:552.10px;font-size:14px;color:#2e2e2e;">Solids <i style="color:#6f6f6f">(4.321)</i></div>
<div class="t" style="right:355px;top:600.10px;font-size:14px;color:#2e2e2e;">Solids <i style="color:#6f6f6f">(4.21)</i></div>
<div class="t" style="right:319px;top:648.10px;font-size:14px;color:#2e2e2e;">Material VOC <i style="color:#6f6f6f">(4.321)</i></div>
<svg style="left:952px;top:698px" width="24" height="24" viewBox="0 0 24 24"><path fill="#3b3b3b" d="M11 18c0 1.1-.9 2-2 2s-2-.9-2-2 .9-2 2-2 2 .9 2 2zm-2-8c-1.1 0-2 .9-2 2s.9 2 2 2 2-.9 2-2-.9-2-2-2zm0-6c-1.1 0-2 .9-2 2s.9 2 2 2 2-.9 2-2-.9-2-2-2zm6 4c1.1 0 2-.9 2-2s-.9-2-2-2-2 .9-2 2 .9 2 2 2zm0 2c-1.1 0-2 .9-2 2s.9 2 2 2 2-.9 2-2-.9-2-2-2zm0 6c-1.1 0-2 .9-2 2s.9 2 2 2 2-.9 2-2-.9-2-2-2z" /></svg>
<div class="t" style="left:988.2px;top:696.40px;font-size:14px;color:#2e2e2e;letter-spacing:-0.25px;">Solid VOC pre Density <i style="color:#6f6f6f">(4.321)</i></div>
<div class="t" style="left:988.2px;top:714.80px;font-size:12px;color:#7a7a7a;">Calculated Column</div>
<svg style="left:1287.7px;top:701.9px" width="17" height="17" viewBox="0 0 24 24"><path fill="#3b3b3b" d="M3 17.25V21h3.75L17.81 9.94l-3.75-3.75L3 17.25zM20.71 7.04c.39-.39.39-1.02 0-1.41l-2.34-2.34c-.39-.39-1.02-.39-1.41 0l-1.83 1.830 3.75 3.75 1.83-1.83z" /></svg>
<svg style="left:1327.9px;top:701.4px" width="17" height="17" viewBox="0 0 24 24"><path fill="#3b3b3b" d="M6 19c0 1.1.9 2 2 2h8c1.1 0 2-.9 2-2V7H6v12zM19 4h-3.5l-1-1h-5l-1 1H5v2h14V4z" /></svg>
<svg style="left:1366.75px;top:700.6px" width="18" height="18" viewBox="0 0 24 24"><path fill="#3b3b3b" d="M12 4.5C7 4.5 2.73 7.61 1 12c1.73 4.39 6 7.5 11 7.5s9.27-3.11 11-7.5c-1.73-4.39-6-7.5-11-7.5zM12 17c-2.76 0-5-2.24-5-5s2.24-5 5-5 5 2.24 5 5-2.24 5-5 5zm0-8c-1.66 0-3 1.34-3 3s1.34 3 3 3 3-1.34 3-3-1.34-3-3-3z" /></svg>
<div class="a" style="left:366px;top:210px;width:708px;height:481px;background:#fff;border-radius:8px;box-shadow:0 6px 24px rgba(0,0,0,0.13),0 2px 5px rgba(0,0,0,0.06);overflow:hidden">
<div class="a" style="left:424px;top:0;width:284px;height:432px;background:#fafafa;border-left:1px solid #e4e4e4"></div>
<div class="a" style="left:0;top:432px;width:708px;height:1px;background:#e2e2e2"></div>
</div>
<div class="t" style="left:382.6px;top:232.70px;font-size:18px;color:#333;-webkit-text-stroke:0.5px #333;">Calculated Columns</div>
<div class="t" style="left:382px;top:262.60px;font-size:14px;color:#333;">Click on the <span style="color:#1e88e5">link</span> to learn more about how to create calculated</div>
<div class="t" style="left:382px;top:283.10px;font-size:14px;color:#333;">columns.</div>
<div class="t" style="left:390.4px;top:319.25px;font-size:11px;color:#444;">Column Name</div>
<div class="a" style="left:382px;top:336.5px;width:392px;height:31px;background:#fff;border:1px solid #c4c4c4;border-radius:8px"></div>
<div class="t" style="left:390.4px;top:345.10px;font-size:14px;color:#333;letter-spacing:-0.3px;">Solid VOC pre Density</div>
<div class="t" style="left:390.4px;top:381.15px;font-size:11px;color:#444;">Type</div>
<div class="a" style="left:382px;top:398.5px;width:192px;height:31px;background:#fff;border:1px solid #c4c4c4;border-radius:8px"></div>
<div class="t" style="left:390.4px;top:406.80px;font-size:14px;color:#333;">Number</div>
<svg style="left:549px;top:410px" width="10" height="6" viewBox="0 0 10 6"><path d="M1 1l4 4 4-4" stroke="#444" stroke-width="1.5" fill="none"/></svg>
<div class="t" style="left:390.4px;top:447.15px;font-size:11px;color:#444;">Expression</div>
<div class="a" style="left:382px;top:463.7px;width:392px;height:147px;background:#fff;border:1px solid #c4c4c4;border-radius:8px"></div>
<div class="t" style="left:390.4px;top:473.10px;font-size:14px;color:#333;">AVG(Solid.Material, VOC.Material) / Density.Material</div>
<div class="t" style="left:807px;top:234.00px;font-size:16px;color:#333;-webkit-text-stroke:0.45px #333;">Columns</div>
<div class="a" style="left:791px;top:256px;width:282px;height:371.5px;overflow:hidden">
<div class="t" style="left:16px;top:13.10px;font-size:14px;color:#333;">Formulations.Formulation</div>
<div class="t" style="left:16px;top:32.80px;font-size:12px;color:#9a9a9a;">Formulations</div>
<div class="t" style="left:16px;top:61.10px;font-size:14px;color:#333;">DateCreated.Formulation</div>
<div class="t" style="left:16px;top:80.80px;font-size:12px;color:#9a9a9a;">Date Created</div>
<div class="t" style="left:16px;top:109.10px;font-size:14px;color:#333;">Analyst.Formulation</div>
<div class="t" style="left:16px;top:128.80px;font-size:12px;color:#9a9a9a;">Analyst</div>
<div class="t" style="left:16px;top:157.10px;font-size:14px;color:#333;">wt.Material</div>
<div class="t" style="left:16px;top:176.80px;font-size:12px;color:#9a9a9a;">wt [%]</div>
<div class="t" style="left:16px;top:205.10px;font-size:14px;color:#333;">ab.Calculated</div>
<div class="t" style="left:16px;top:224.80px;font-size:12px;color:#9a9a9a;">a-b</div>
<div class="t" style="left:16px;top:253.10px;font-size:14px;color:#333;">FormulationType.Formulation</div>
<div class="t" style="left:16px;top:272.80px;font-size:12px;color:#9a9a9a;">Formulation Type</div>
<div class="t" style="left:16px;top:301.10px;font-size:14px;color:#333;">MaterialName.Material</div>
<div class="t" style="left:16px;top:320.80px;font-size:12px;color:#9a9a9a;">Material Name</div>
<div class="t" style="left:16px;top:349.10px;font-size:14px;color:#333;">Solids.Material</div>
<div class="t" style="left:16px;top:368.80px;font-size:12px;color:#9a9a9a;">Solids</div>
</div>
<div class="a" style="left:1067.6px;top:262px;width:6px;height:135px;background:#90caf9;border-radius:3px"></div>
<div class="a" style="left:910px;top:651px;width:77.5px;height:32px;background:#fff;border:1px solid #2d8fd8;border-radius:7px"></div>
<div class="t" style="left:926.5px;top:661.34px;font-size:12.3px;color:#2d8fd8;transform:scaleX(0.9);transform-origin:0 0;-webkit-text-stroke:0.4px #2d8fd8;">CANCEL</div>
<div class="a" style="left:996px;top:651px;width:62px;height:32px;background:#2196f3;border-radius:7px"></div>
<div class="t" style="left:1012.7px;top:661.34px;font-size:12.3px;color:#fff;transform:scaleX(0.905);transform-origin:0 0;-webkit-text-stroke:0.4px #fff;">SAVE</div>
</body></html>
